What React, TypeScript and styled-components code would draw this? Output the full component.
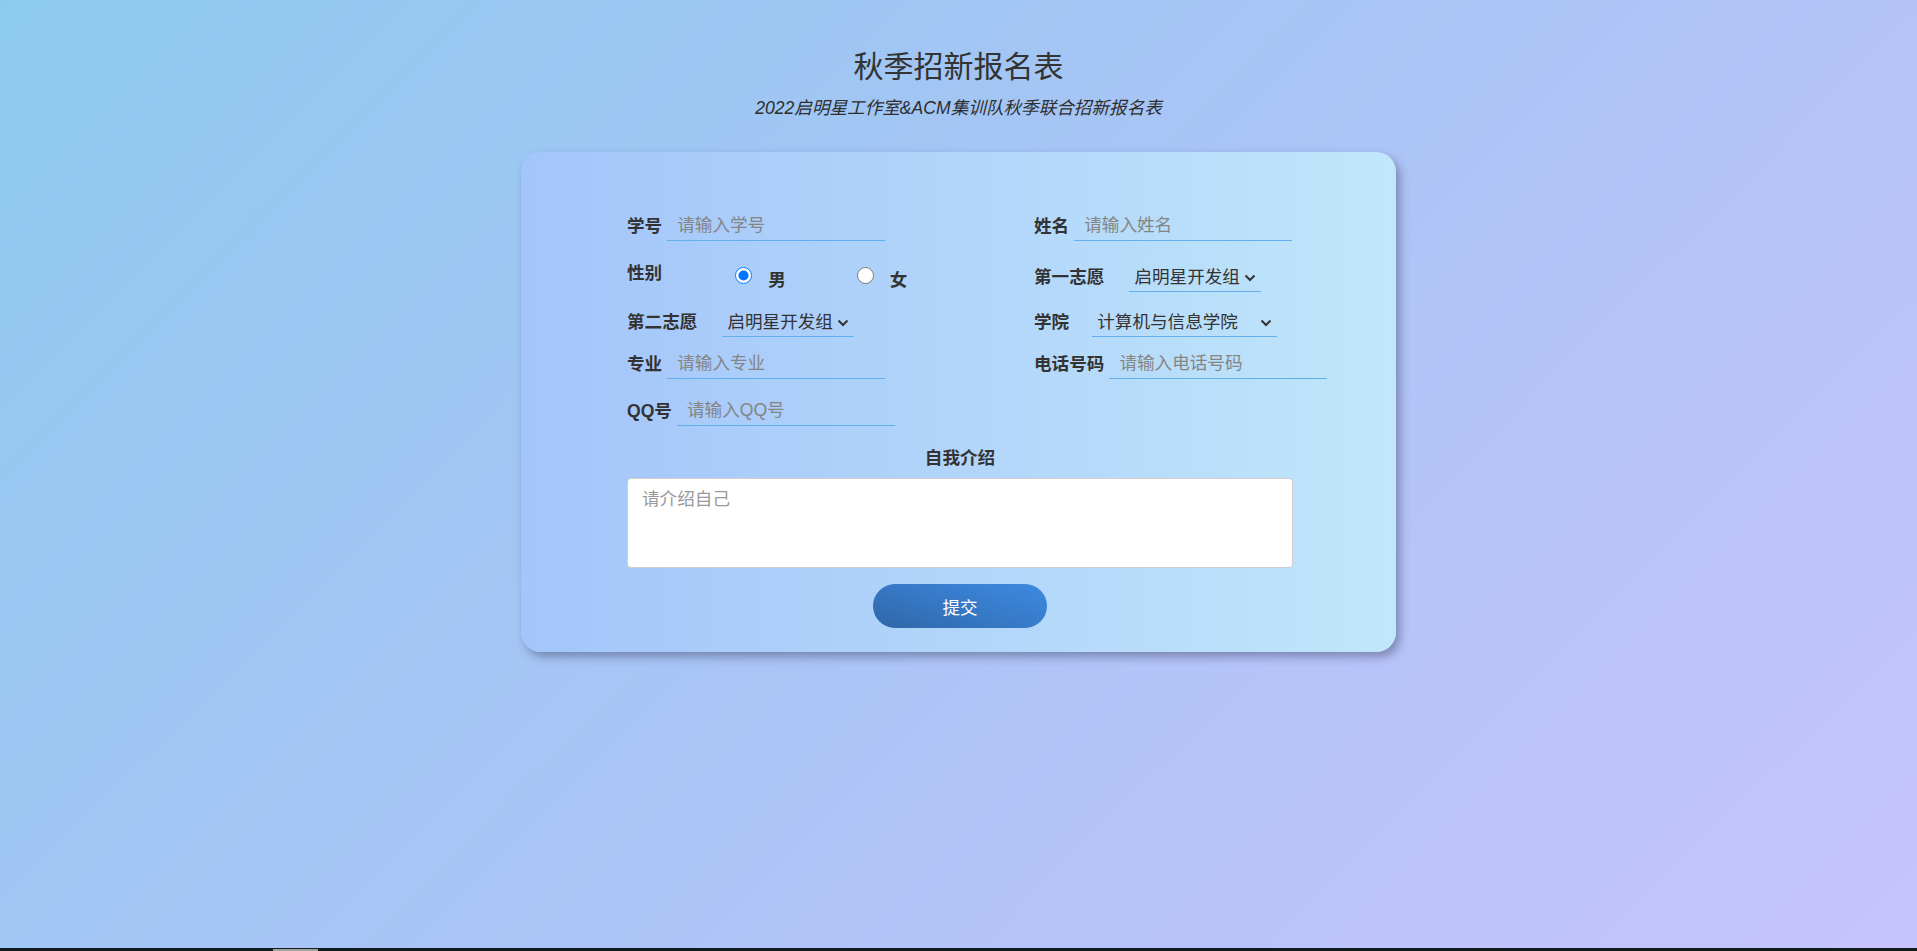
import React from "react";
import styled, { createGlobalStyle } from "styled-components";

const GlobalStyle = createGlobalStyle`
  html, body {
    margin: 0;
    padding: 0;
  }
  body {
    font-family: "Liberation Sans", "Noto Sans CJK SC", sans-serif;
    color: #333;
    overflow: hidden;
  }
  * { box-sizing: border-box; }
`;

const Page = styled.div`
  height: 948px;
  padding-top: 47px;
  display: flex;
  flex-direction: column;
  align-items: center;
  background: linear-gradient(135deg, #8ecaf0 0%, #aac4f6 50%, #c7c3fd 100%);
`;

const Title = styled.h1`
  margin: 0;
  font-size: 30px;
  font-weight: 400;
  line-height: 40px;
  color: #333;
`;

const Subtitle = styled.p`
  margin: 9px 0 0;
  font-size: 17.6px;
  font-style: italic;
  line-height: 24px;
  color: #2e2e2e;
`;

const Card = styled.div`
  margin-top: 32px;
  width: 875px;
  height: 500px;
  padding: 58px 0 24px 106px;
  border-radius: 20px;
  background: linear-gradient(90deg, #a3c5fa 0%, #b0d3fa 45%, #c0e7fa 100%);
  box-shadow: 4px 5px 10px rgba(40, 40, 70, 0.38);
`;

const Form = styled.form`
  width: 666px;
`;

const Row = styled.div<{ $mt: number }>`
  display: grid;
  grid-template-columns: 407px 1fr;
  margin-top: ${(p) => p.$mt}px;
`;

const Field = styled.div<{ $top?: boolean }>`
  display: flex;
  align-items: ${(p) => (p.$top ? "flex-start" : "center")};
  height: 32px;
`;

const Label = styled.label`
  font-size: 17.6px;
  font-weight: 700;
  line-height: 24px;
  color: #333;
  margin-right: 5px;
  white-space: nowrap;
`;

const TextInput = styled.input<{ $w: number }>`
  width: ${(p) => p.$w}px;
  height: 30px;
  padding: 0 10px;
  border: none;
  border-bottom: 1px solid #63aff0;
  background: transparent;
  outline: none;
  font-family: inherit;
  font-size: 17.6px;
  color: #333;
  &::placeholder {
    color: #858585;
  }
`;

const SelectWrap = styled.div<{ $ml: number }>`
  position: relative;
  margin-left: ${(p) => p.$ml}px;
  display: flex;
`;

const Select = styled.select<{ $w: number }>`
  appearance: none;
  -webkit-appearance: none;
  width: ${(p) => p.$w}px;
  height: 30px;
  padding: 0 20px 0 5px;
  border: none;
  border-radius: 0;
  border-bottom: 1px solid #63aff0;
  background: transparent;
  outline: none;
  font-family: inherit;
  font-size: 17.6px;
  color: #333;
`;

const Chevron = styled.svg`
  position: absolute;
  right: 5px;
  top: 12px;
  pointer-events: none;
`;

const RadioGroup = styled.div`
  display: flex;
  gap: 71px;
  margin-left: 68px;
`;

const RadioOption = styled.label`
  display: flex;
  align-items: flex-start;
  gap: 16px;
`;

const Radio = styled.input`
  width: 17px;
  height: 17px;
  margin: 6px 0 0;
`;

const RadioText = styled.span`
  margin-top: 7px;
  font-size: 17.6px;
  font-weight: 700;
  line-height: 24px;
  color: #333;
`;

const IntroLabel = styled.div`
  margin-top: 19px;
  text-align: center;
  font-size: 17.6px;
  font-weight: 700;
  line-height: 24px;
  color: #333;
`;

const TextArea = styled.textarea`
  display: block;
  width: 100%;
  height: 90px;
  margin-top: 8px;
  padding: 8px 14px;
  border: 1px solid #cfcfcf;
  border-radius: 4px;
  background: #fff;
  resize: none;
  outline: none;
  font-family: inherit;
  font-size: 17.6px;
  line-height: 24px;
  color: #333;
  &::placeholder {
    color: #9a9a9a;
  }
`;

const SubmitButton = styled.button`
  display: block;
  width: 174px;
  height: 44px;
  margin: 16px auto 0;
  border: none;
  border-radius: 22px;
  background: linear-gradient(18deg, #2f66a6 0%, #3678c4 45%, #3d8ae0 100%);
  color: #fff;
  font-family: inherit;
  font-size: 17.6px;
  cursor: pointer;
`;

const ScrollStrip = styled.div`
  height: 3px;
  background: #0f1b1d;
  display: flex;
`;

const ScrollThumb = styled.div`
  margin: 1px 0 0 273px;
  width: 45px;
  height: 2px;
  background: #a3a3a3;
`;

function ChevronIcon() {
  return (
    <Chevron width="12" height="8" viewBox="0 0 12 8">
      <path d="M1.5 1.5 L6 6 L10.5 1.5" fill="none" stroke="#333" strokeWidth="2" />
    </Chevron>
  );
}

function SelectField({ w, ml = 20, options }: { w: number; ml?: number; options: string[] }) {
  return (
    <SelectWrap $ml={ml}>
      <Select $w={w} defaultValue={options[0]}>
        {options.map((o) => (
          <option key={o} value={o}>
            {o}
          </option>
        ))}
      </Select>
      <ChevronIcon />
    </SelectWrap>
  );
}

const groups = ["启明星开发组", "ACM集训队"];
const colleges = ["计算机与信息学院", "数学与统计学院", "电子工程学院"];

export default function App() {
  return (
    <>
      <GlobalStyle />
      <Page>
        <Title>秋季招新报名表</Title>
        <Subtitle>2022启明星工作室&amp;ACM集训队秋季联合招新报名表</Subtitle>
        <Card>
          <Form onSubmit={(e) => e.preventDefault()}>
            <Row $mt={0}>
              <Field>
                <Label>学号</Label>
                <TextInput $w={218} placeholder="请输入学号" />
              </Field>
              <Field>
                <Label>姓名</Label>
                <TextInput $w={218} placeholder="请输入姓名" />
              </Field>
            </Row>
            <Row $mt={19}>
              <Field $top>
                <Label>性别</Label>
                <RadioGroup>
                  <RadioOption>
                    <Radio type="radio" name="sex" defaultChecked />
                    <RadioText>男</RadioText>
                  </RadioOption>
                  <RadioOption>
                    <Radio type="radio" name="sex" />
                    <RadioText>女</RadioText>
                  </RadioOption>
                </RadioGroup>
              </Field>
              <Field>
                <Label>第一志愿</Label>
                <SelectField w={132} options={groups} />
              </Field>
            </Row>
            <Row $mt={13}>
              <Field>
                <Label>第二志愿</Label>
                <SelectField w={132} options={groups} />
              </Field>
              <Field>
                <Label>学院</Label>
                <SelectField w={185} ml={18} options={colleges} />
              </Field>
            </Row>
            <Row $mt={10}>
              <Field>
                <Label>专业</Label>
                <TextInput $w={218} placeholder="请输入专业" />
              </Field>
              <Field>
                <Label>电话号码</Label>
                <TextInput $w={218} placeholder="请输入电话号码" />
              </Field>
            </Row>
            <Row $mt={15}>
              <Field>
                <Label>QQ号</Label>
                <TextInput $w={218} placeholder="请输入QQ号" />
              </Field>
            </Row>
            <IntroLabel>自我介绍</IntroLabel>
            <TextArea placeholder="请介绍自己" />
            <SubmitButton type="submit">提交</SubmitButton>
          </Form>
        </Card>
      </Page>
      <ScrollStrip>
        <ScrollThumb />
      </ScrollStrip>
    </>
  );
}
